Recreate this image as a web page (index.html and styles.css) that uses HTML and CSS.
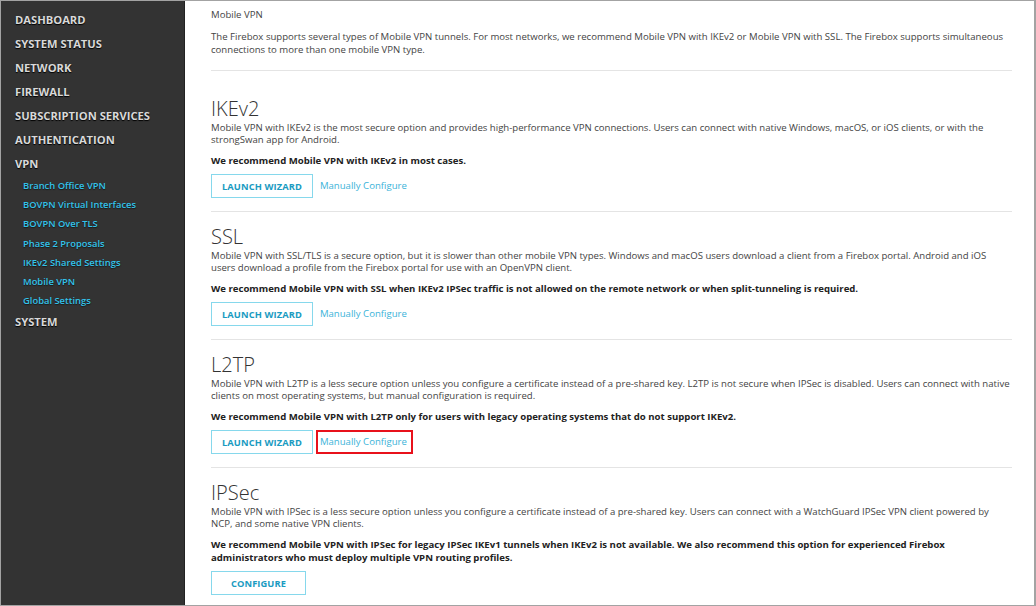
FILE: index.html
```html
<!DOCTYPE html>
<html>
<head>
<meta charset="utf-8">
<link rel="stylesheet" href="styles.css">
</head>
<body>
<div class="frame">
  <nav class="sidebar">
    <ul class="nav">
      <li class="top">DASHBOARD</li>
      <li class="top">SYSTEM STATUS</li>
      <li class="top">NETWORK</li>
      <li class="top">FIREWALL</li>
      <li class="top">SUBSCRIPTION SERVICES</li>
      <li class="top">AUTHENTICATION</li>
      <li class="top">VPN</li>
      <li>
        <ul class="sub">
          <li>Branch Office VPN</li>
          <li>BOVPN Virtual Interfaces</li>
          <li>BOVPN Over TLS</li>
          <li>Phase 2 Proposals</li>
          <li>IKEv2 Shared Settings</li>
          <li>Mobile VPN</li>
          <li>Global Settings</li>
        </ul>
      </li>
      <li class="top">SYSTEM</li>
    </ul>
  </nav>
  <main class="main">
    <div class="crumb">Mobile VPN</div>
    <p class="intro">The Firebox supports several types of Mobile VPN tunnels. For most networks, we recommend Mobile VPN with IKEv2 or Mobile VPN with SSL. The Firebox supports simultaneous connections to more than one mobile VPN type.</p>
    <hr class="rule first">
    <section class="vpn">
      <h2 class="title">IKEv2</h2>
      <p class="desc">Mobile VPN with IKEv2 is the most secure option and provides high-performance VPN connections. Users can connect with native Windows, macOS, or iOS clients, or with the strongSwan app for Android.</p>
      <p class="rec">We recommend Mobile VPN with IKEv2 in most cases.</p>
      <div class="actions">
        <button class="btn">LAUNCH WIZARD</button>
        <a class="link">Manually Configure</a>
      </div>
    </section>
    <hr class="rule">
    <section class="vpn">
      <h2 class="title">SSL</h2>
      <p class="desc">Mobile VPN with SSL/TLS is a secure option, but it is slower than other mobile VPN types. Windows and macOS users download a client from a Firebox portal. Android and iOS users download a profile from the Firebox portal for use with an OpenVPN client.</p>
      <p class="rec">We recommend Mobile VPN with SSL when IKEv2 IPSec traffic is not allowed on the remote network or when split-tunneling is required.</p>
      <div class="actions">
        <button class="btn">LAUNCH WIZARD</button>
        <a class="link">Manually Configure</a>
      </div>
    </section>
    <hr class="rule">
    <section class="vpn">
      <h2 class="title">L2TP</h2>
      <p class="desc">Mobile VPN with L2TP is a less secure option unless you configure a certificate instead of a pre-shared key. L2TP is not secure when IPSec is disabled. Users can connect with native clients on most operating systems, but manual configuration is required.</p>
      <p class="rec">We recommend Mobile VPN with L2TP only for users with legacy operating systems that do not support IKEv2.</p>
      <div class="actions">
        <button class="btn">LAUNCH WIZARD</button>
        <a class="link marked">Manually Configure</a>
      </div>
    </section>
    <hr class="rule">
    <section class="vpn">
      <h2 class="title">IPSec</h2>
      <p class="desc">Mobile VPN with IPSec is a less secure option unless you configure a certificate instead of a pre-shared key. Users can connect with a WatchGuard IPSec VPN client powered by NCP, and some native VPN clients.</p>
      <p class="rec">We recommend Mobile VPN with IPSec for legacy IPSec IKEv1 tunnels when IKEv2 is not available. We also recommend this option for experienced Firebox administrators who must deploy multiple VPN routing profiles.</p>
      <div class="actions">
        <button class="btn wide">CONFIGURE</button>
      </div>
    </section>
  </main>
</div>
</body>
</html>
```

FILE: styles.css
```css
* { box-sizing: border-box; }
html, body { margin: 0; padding: 0; }
body {
  font-family: "Open Sans", "Noto Sans", sans-serif;
  background: #fff;
  overflow: hidden;
}
.frame {
  width: 1036px;
  height: 606px;
  border: 1px solid #a3a3a3;
  border-right-width: 2px;
  display: flex;
  overflow: hidden;
}
.sidebar {
  width: 184px;
  flex: none;
  background: #333333;
  border-right: 1px solid #222;
}
.nav, .sub { list-style: none; margin: 0; padding: 0; }
.nav { padding-top: 7px; }
.top {
  padding-left: 14px;
  line-height: 24px;
  font-size: 11.2px;
  font-weight: 700;
  color: #d9d9d9;
  text-shadow: 0 1px 1px #000;
}
.sub li {
  padding-left: 22px;
  line-height: 19.2px;
  font-size: 9.4px;
  font-weight: 600;
  color: #33c3eb;
  text-shadow: 0 1px 1px rgba(0,0,0,0.5);
}
.main {
  flex: 1;
  padding: 7px 22px 0 26px;
  color: #444;
  font-size: 9.6px;
  min-width: 0;
}
.crumb { line-height: 13px; }
.intro { margin: 9px 0 0; line-height: 13px; }
.rule {
  border: 0;
  border-top: 1px solid #e4e4e4;
  margin: 0;
  height: 0;
}
.rule.first { margin: 14px 0 13px; }
.vpn { padding-top: 13px; padding-bottom: 13px; }
.title {
  margin: 0;
  font-size: 20px;
  font-weight: 300;
  line-height: 24px;
  color: #333;
}
.desc { margin: 1px 0 0; line-height: 12px; }
.rec {
  margin: 8px 0 0;
  line-height: 13px;
  font-weight: 700;
  color: #222;
}
.actions {
  display: flex;
  align-items: stretch;
  margin-top: 7px;
  height: 24px;
}
.btn {
  font-family: inherit;
  background: #fff;
  border: 1px solid #86d8ec;
  color: #1a9bc1;
  font-size: 9.3px;
  font-weight: 700;
  letter-spacing: 0.1px;
  padding: 0 10px;
  min-width: 95px;
  height: 24px;
}
.link {
  display: flex;
  align-items: center;
  margin-left: 3px;
  padding: 0 4px 1px 2px;
  border: 2px solid transparent;
  color: #3bb3d9;
  font-size: 9.6px;
}
.link.marked { border-color: #e8111b; }
.vpn:last-child { padding-bottom: 0; }
```
